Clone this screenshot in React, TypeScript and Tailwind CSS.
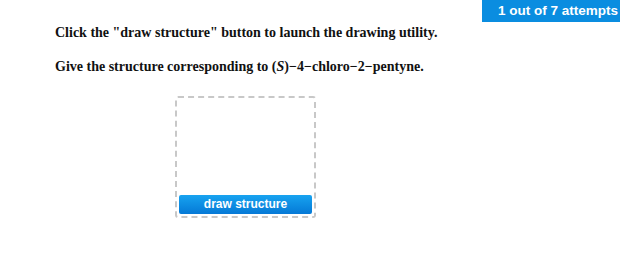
export default function App() {
  return (
    <div className="relative h-[278px] w-[620px] overflow-hidden bg-white">
      <div className="flex justify-end">
        <div className="flex h-[22px] w-[138px] items-center whitespace-nowrap bg-[#0a8de0] pl-[16px] font-['Liberation_Sans',Arial,sans-serif] text-[13.5px] font-bold text-white">
          1 out of 7 attempts
        </div>
      </div>
      <div className="pl-[55px] font-['Liberation_Serif','Times_New_Roman',serif] text-[14px] font-bold text-[#111]">
        <p className="mt-[3px] leading-[16px]">Click the "draw structure" button to launch the drawing utility.</p>
        <p className="mt-[18px] leading-[16px]">
          Give the structure corresponding to (<i className="italic">S</i>)−4−chloro−2−pentyne.
        </p>
      </div>
      <div className="ml-[175px] mt-[21px] flex h-[122px] w-[141px] flex-col justify-end rounded-[3px] border-2 border-dashed border-[#c8c8c8] px-[2px] pb-[2px]">
        <button className="h-[19px] w-full rounded-[2px] bg-gradient-to-b from-[#18a3f0] to-[#0679d6] font-['Liberation_Sans',Arial,sans-serif] text-[12px] font-bold leading-[19px] text-white">
          draw structure
        </button>
      </div>
    </div>
  )
}
